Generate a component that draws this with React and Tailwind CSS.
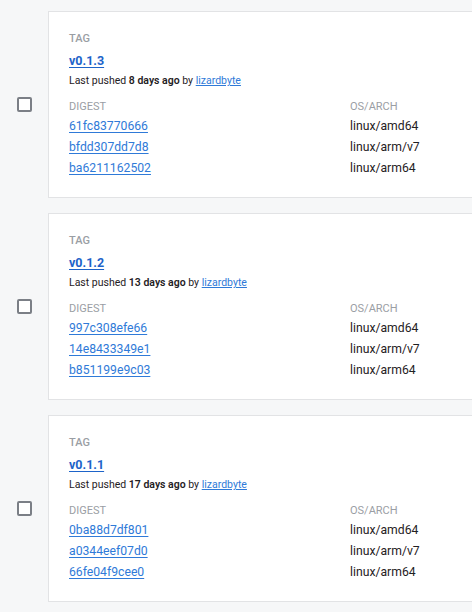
import React from 'react';

const tags = [
  {
    tag: 'v0.1.3',
    pushed: '8 days ago',
    images: [
      { digest: '61fc83770666', arch: 'linux/amd64' },
      { digest: 'bfdd307dd7d8', arch: 'linux/arm/v7' },
      { digest: 'ba6211162502', arch: 'linux/arm64' },
    ],
  },
  {
    tag: 'v0.1.2',
    pushed: '13 days ago',
    images: [
      { digest: '997c308efe66', arch: 'linux/amd64' },
      { digest: '14e8433349e1', arch: 'linux/arm/v7' },
      { digest: 'b851199e9c03', arch: 'linux/arm64' },
    ],
  },
  {
    tag: 'v0.1.1',
    pushed: '17 days ago',
    images: [
      { digest: '0ba88d7df801', arch: 'linux/amd64' },
      { digest: 'a0344eef07d0', arch: 'linux/arm/v7' },
      { digest: '66fe04f9cee0', arch: 'linux/arm64' },
    ],
  },
];

const TagCard = ({ item }) => (
  <div className="flex items-center">
    <div className="w-[48px] shrink-0 flex">
      <div className="ml-[17px] w-[15px] h-[15px] border-2 border-[#7b7f86] rounded-[2px] bg-white"></div>
    </div>
    <div className="w-[440px] shrink-0 h-[187px] bg-white border border-[#e2e3e5] pl-[20px] pt-[19px]">
      <div className="text-[11px] leading-[16px] font-medium text-[#9a9ea4] uppercase">Tag</div>
      <a className="block mt-[4px] text-[12.5px] leading-[20px] font-bold text-[#1d63c9] underline underline-offset-2 w-fit">
        {item.tag}
      </a>
      <div className="mt-[2px] text-[10.5px] leading-[16px] text-[#1f2124]">
        Last pushed <span className="font-semibold">{item.pushed}</span> by{' '}
        <a className="text-[#2f7ad8] underline underline-offset-1">lizardbyte</a>
      </div>
      <div className="mt-[10px] grid grid-cols-[281px_1fr]">
        <div className="text-[11px] leading-[16px] text-[#9a9ea4]">DIGEST</div>
        <div className="text-[11px] leading-[16px] text-[#9a9ea4]">OS/ARCH</div>
      </div>
      <div className="mt-[1px] grid grid-cols-[281px_1fr]">
        {item.images.map((img) => (
          <React.Fragment key={img.digest}>
            <div className="text-[12.2px] leading-[21px]">
              <a className="text-[#2f7ad8] underline underline-offset-2">{img.digest}</a>
            </div>
            <div className="text-[12.2px] leading-[21px] text-[#1f2124]">{img.arch}</div>
          </React.Fragment>
        ))}
      </div>
    </div>
  </div>
);

export default function App() {
  return (
    <div className="w-[474px] h-[612px] bg-white overflow-hidden" style={{ fontFamily: 'Roboto, "Noto Sans", sans-serif' }}>
      <div className="w-[472px] h-[612px] bg-[#f6f7f8] overflow-hidden pt-[11px] flex flex-col gap-[15px]">
        {tags.map((t) => (
          <TagCard key={t.tag} item={t} />
        ))}
      </div>
    </div>
  );
}
